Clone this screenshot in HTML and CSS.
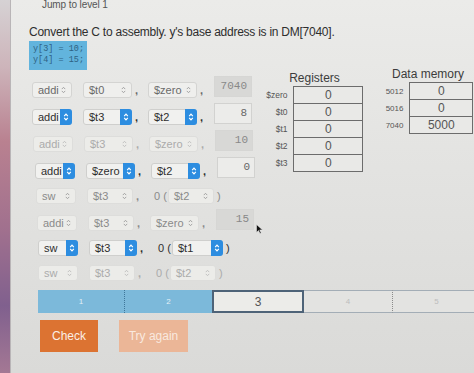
FILE: index.html
```html
<!DOCTYPE html>
<html>
<head>
<meta charset="utf-8">
<title>Convert the C to assembly</title>
<link rel="stylesheet" href="styles.css">
</head>
<body>
<div class="page">
  <div class="strip"></div>
  <div class="content">
    <div class="jump">Jump to level 1</div>
    <p class="title">Convert the C to assembly. y's base address is in DM[7040].</p>
    <div class="work">
      <div class="program">
        <pre class="code">y[3] = 10;
y[4] = 15;</pre>
        <div class="rows">
          <div class="row mid">
            <span class="sel w40"><span>addi</span><svg class="ar" viewBox="0 0 5 9"><path d="M.8 3.6 2.5 1.8 4.2 3.6M.8 5.4 2.5 7.2 4.2 5.4"/></svg></span>
            <span class="sel w49 g1"><span>$t0</span><svg class="ar" viewBox="0 0 5 9"><path d="M.8 3.6 2.5 1.8 4.2 3.6M.8 5.4 2.5 7.2 4.2 5.4"/></svg></span>
            <span class="cm">,</span>
            <span class="sel w49"><span>$zero</span><svg class="ar" viewBox="0 0 5 9"><path d="M.8 3.6 2.5 1.8 4.2 3.6M.8 5.4 2.5 7.2 4.2 5.4"/></svg></span>
            <span class="cm c2">,</span>
            <span class="in g">7040</span>
          </div>
          <div class="row on">
            <span class="sel b w40"><span>addi</span><span class="btn"><svg viewBox="0 0 6 10"><path d="M1.2 4.2 3 2.2 4.8 4.2M1.2 5.8 3 7.8 4.8 5.8"/></svg></span></span>
            <span class="sel b w49 g1"><span>$t3</span><span class="btn"><svg viewBox="0 0 6 10"><path d="M1.2 4.2 3 2.2 4.8 4.2M1.2 5.8 3 7.8 4.8 5.8"/></svg></span></span>
            <span class="cm">,</span>
            <span class="sel b w49"><span>$t2</span><span class="btn"><svg viewBox="0 0 6 10"><path d="M1.2 4.2 3 2.2 4.8 4.2M1.2 5.8 3 7.8 4.8 5.8"/></svg></span></span>
            <span class="cm c2">,</span>
            <span class="in">8</span>
          </div>
          <div class="row dis">
            <span class="sel w40"><span>addi</span><svg class="ar" viewBox="0 0 5 9"><path d="M.8 3.6 2.5 1.8 4.2 3.6M.8 5.4 2.5 7.2 4.2 5.4"/></svg></span>
            <span class="sel w49 g1"><span>$t3</span><svg class="ar" viewBox="0 0 5 9"><path d="M.8 3.6 2.5 1.8 4.2 3.6M.8 5.4 2.5 7.2 4.2 5.4"/></svg></span>
            <span class="cm">,</span>
            <span class="sel w49"><span>$zero</span><svg class="ar" viewBox="0 0 5 9"><path d="M.8 3.6 2.5 1.8 4.2 3.6M.8 5.4 2.5 7.2 4.2 5.4"/></svg></span>
            <span class="cm c2">,</span>
            <span class="in g">10</span>
          </div>
          <div class="row on">
            <span class="sel b w40"><span>addi</span><span class="btn"><svg viewBox="0 0 6 10"><path d="M1.2 4.2 3 2.2 4.8 4.2M1.2 5.8 3 7.8 4.8 5.8"/></svg></span></span>
            <span class="sel b w49 g1"><span>$zero</span><span class="btn"><svg viewBox="0 0 6 10"><path d="M1.2 4.2 3 2.2 4.8 4.2M1.2 5.8 3 7.8 4.8 5.8"/></svg></span></span>
            <span class="cm">,</span>
            <span class="sel b w49"><span>$t2</span><span class="btn"><svg viewBox="0 0 6 10"><path d="M1.2 4.2 3 2.2 4.8 4.2M1.2 5.8 3 7.8 4.8 5.8"/></svg></span></span>
            <span class="cm c2">,</span>
            <span class="in">0</span>
          </div>
          <div class="row short mid2">
            <span class="sel w40"><span>sw</span><svg class="ar" viewBox="0 0 5 9"><path d="M.8 3.6 2.5 1.8 4.2 3.6M.8 5.4 2.5 7.2 4.2 5.4"/></svg></span>
            <span class="sel w46 g1"><span>$t3</span><svg class="ar" viewBox="0 0 5 9"><path d="M.8 3.6 2.5 1.8 4.2 3.6M.8 5.4 2.5 7.2 4.2 5.4"/></svg></span>
            <span class="cm">,</span>
            <span class="off">0 (</span>
            <span class="sel w46"><span>$t2</span><svg class="ar" viewBox="0 0 5 9"><path d="M.8 3.6 2.5 1.8 4.2 3.6M.8 5.4 2.5 7.2 4.2 5.4"/></svg></span>
            <span class="par">)</span>
          </div>
          <div class="row mid2">
            <span class="sel w40"><span>addi</span><svg class="ar" viewBox="0 0 5 9"><path d="M.8 3.6 2.5 1.8 4.2 3.6M.8 5.4 2.5 7.2 4.2 5.4"/></svg></span>
            <span class="sel w46 g1"><span>$t3</span><svg class="ar" viewBox="0 0 5 9"><path d="M.8 3.6 2.5 1.8 4.2 3.6M.8 5.4 2.5 7.2 4.2 5.4"/></svg></span>
            <span class="cm">,</span>
            <span class="sel w49 g2"><span>$zero</span><svg class="ar" viewBox="0 0 5 9"><path d="M.8 3.6 2.5 1.8 4.2 3.6M.8 5.4 2.5 7.2 4.2 5.4"/></svg></span>
            <span class="cm c2">,</span>
            <span class="in g">15</span>
          </div>
          <div class="row short on">
            <span class="sel b w40"><span>sw</span><span class="btn"><svg viewBox="0 0 6 10"><path d="M1.2 4.2 3 2.2 4.8 4.2M1.2 5.8 3 7.8 4.8 5.8"/></svg></span></span>
            <span class="sel b w48 g1"><span>$t3</span><span class="btn"><svg viewBox="0 0 6 10"><path d="M1.2 4.2 3 2.2 4.8 4.2M1.2 5.8 3 7.8 4.8 5.8"/></svg></span></span>
            <span class="cm">,</span>
            <span class="off">0 (</span>
            <span class="sel b w51"><span>$t1</span><span class="btn"><svg viewBox="0 0 6 10"><path d="M1.2 4.2 3 2.2 4.8 4.2M1.2 5.8 3 7.8 4.8 5.8"/></svg></span></span>
            <span class="par">)</span>
          </div>
          <div class="row short dis">
            <span class="sel w40"><span>sw</span><svg class="ar" viewBox="0 0 5 9"><path d="M.8 3.6 2.5 1.8 4.2 3.6M.8 5.4 2.5 7.2 4.2 5.4"/></svg></span>
            <span class="sel w46 g1"><span>$t3</span><svg class="ar" viewBox="0 0 5 9"><path d="M.8 3.6 2.5 1.8 4.2 3.6M.8 5.4 2.5 7.2 4.2 5.4"/></svg></span>
            <span class="cm">,</span>
            <span class="off">0 (</span>
            <span class="sel w46"><span>$t2</span><svg class="ar" viewBox="0 0 5 9"><path d="M.8 3.6 2.5 1.8 4.2 3.6M.8 5.4 2.5 7.2 4.2 5.4"/></svg></span>
            <span class="par">)</span>
          </div>
        </div>
      </div>
      <div class="regs">
        <div class="ptitle">Registers</div>
        <table class="tbl">
          <tr><th>$zero</th><td>0</td></tr>
          <tr><th>$t0</th><td>0</td></tr>
          <tr><th>$t1</th><td>0</td></tr>
          <tr><th>$t2</th><td>0</td></tr>
          <tr><th>$t3</th><td>0</td></tr>
        </table>
      </div>
      <div class="dm">
        <div class="ptitle">Data memory</div>
        <table class="tbl dmt">
          <tr><th>5012</th><td>0</td></tr>
          <tr><th>5016</th><td>0</td></tr>
          <tr><th>7040</th><td>5000</td></tr>
        </table>
      </div>
    </div>
    <div class="prog">
      <div class="seg done first">1</div>
      <div class="seg done">2</div>
      <div class="seg cur">3</div>
      <div class="seg todo four">4</div>
      <div class="seg todo five">5</div>
    </div>
    <div class="btns">
      <button class="bt check">Check</button>
      <button class="bt try">Try again</button>
    </div>
  </div>
</div>
<svg class="cursor" viewBox="0 0 7 10"><path d="M.5.5v8l2-2 1.5 3 1.2-.6-1.5-3H6.5z" fill="#111" stroke="#eee" stroke-width=".5"/></svg>
</body>
</html>
```
FILE: styles.css
```css
* { box-sizing: border-box; }
html, body { margin: 0; }
body {
  width: 474px;
  height: 373px;
  overflow: hidden;
  position: relative;
  background: linear-gradient(180deg, #ebebe9 0%, #e3e3e1 45%, #dadad8 100%);
  font-family: "Liberation Sans", Arial, sans-serif;
  color: #444;
}
.page { display: flex; height: 373px; }
.strip {
  width: 11px;
  flex: none;
  background: linear-gradient(180deg, #d6d2d4 0%, #cdb4ba 18%, #b98190 38%, #a0708e 62%, #80608e 82%, #a47894 100%);
  border-right: 1px solid #b9b5b7;
}
.content { flex: 1; min-width: 0; padding-left: 18px; }
.jump {
  margin-top: -1px;
  height: 11px;
  line-height: 11px;
  font-size: 10px;
  color: #555;
  padding-left: 13px;
  letter-spacing: -0.1px;
}
.title {
  margin: 15px 0 0;
  font-size: 12px;
  line-height: 15px;
  letter-spacing: -0.25px;
  color: #2e2e2e;
  white-space: nowrap;
}
.work { display: flex; align-items: flex-start; margin-top: 1px; }
.program { width: 237px; flex: none; }
.code {
  display: block;
  margin: 0;
  width: 58px;
  height: 29px;
  padding: 3px 4px;
  background: #62b4dd;
  color: #2f6283;
  font-family: "Liberation Mono", monospace;
  font-size: 8.5px;
  line-height: 11px;
}
.rows { display: flex; flex-direction: column; gap: 5px; margin-top: 6px; padding-left: 3px; }
.row { display: flex; align-items: flex-end; height: 22px; color: #333; }
.row.short { height: 20px; }
.row:nth-child(3) { padding-left: 1px; }
.row:nth-child(4) { padding-left: 3px; }
.row:nth-child(5) { padding-left: 4px; }
.row:nth-child(6) { padding-left: 5px; }
.row:nth-child(7) { padding-left: 6px; }
.row:nth-child(8) { padding-left: 6px; }
.sel {
  display: flex;
  align-items: center;
  justify-content: space-between;
  flex: none;
  height: 16px;
  padding: 0 5px 0 5px;
  border: 1px solid #d4d4d2;
  border-radius: 3px;
  background: #efefed;
  font-size: 11px;
  line-height: 14px;
}
.w40 { width: 40px; }
.g1 { margin-left: 11px; }
.w46 { width: 46px; }
.w48 { width: 48px; }
.w49 { width: 49px; }
.w51 { width: 51px; }
.ar { width: 5px; height: 10px; fill: none; stroke: #9c9c9c; stroke-width: .9; }
.sel.b { padding-right: 0; background: #f1f1ef; border-color: #cfcfcd; }
.btn {
  display: flex;
  align-items: center;
  justify-content: center;
  width: 12px;
  height: 16px;
  margin: 0 -1px 0 0;
  background: #2d8de0;
  border-radius: 0 3px 3px 0;
}
.btn svg { width: 6px; height: 10px; fill: none; stroke: #fff; stroke-width: 1.2; }
.cm {
  flex: none;
  width: 16px;
  padding-left: 3px;
  font-size: 11px;
  font-weight: bold;
  line-height: 15px;
}
.cm.c2 { width: 17px; }
.off { flex: none; padding-left: 5px; width: 19px; font-size: 11px; line-height: 15px; white-space: pre; }
.par { flex: none; padding-left: 3px; font-size: 11px; line-height: 15px; }
.in {
  flex: none;
  width: 38px;
  height: 21px;
  margin-bottom: 1px;
  padding: 0 4px;
  border: 1px solid #d2d2d0;
  background: #ececea;
  font-family: "Liberation Mono", monospace;
  font-size: 11px;
  line-height: 19px;
  text-align: right;
  color: #666;
}
.in.g { background: #d8d8d6; border-color: #d6d6d4; color: #888; }
.mid { color: #6a6a6a; }
.mid2 { color: #8a8a8a; }
.dis { color: #ababab; }
.dis .sel, .mid2 .sel { background: #ecece9; border-color: #dddddb; }
.dis .ar { stroke: #bdbdbd; }
.on { color: #2e2e2e; }
.regs { width: 97px; flex: none; margin-top: 30px; }
.dm { width: 90px; flex: none; margin-left: 20px; margin-top: 26px; }
.ptitle { text-align: center; font-size: 12px; line-height: 15px; color: #3c3c3c; }
.tbl { border-collapse: collapse; }
.tbl th {
  width: 28px;
  padding: 0 6px 0 0;
  font-weight: normal;
  font-size: 8.5px;
  text-align: right;
  color: #555;
}
.tbl td {
  width: 69px;
  height: 17px;
  padding: 0;
  border: 1px solid #6c6c6c;
  background: #e9e9e7;
  text-align: center;
  font-size: 12px;
  line-height: 15px;
  color: #555;
}
.dmt th { width: 27px; font-size: 8px; }
.dmt td { width: 63px; }
.prog { display: flex; height: 23px; margin: 9px 0 0 9px; }
.seg { display: flex; align-items: center; justify-content: center; flex: none; font-size: 8px; }
.done { width: 87px; background: #7cb9da; color: #e2f0f7; }
.done.first { border-right: 1px dotted #3f7699; }
.cur { width: 92px; border: 2px solid #4e6378; background: #ecece9; font-size: 12px; color: #555; }
.todo { background: #e3e3e1; border-top: 1px solid #a3adb6; border-bottom: 1px solid #a3adb6; color: #bdbdbd; }
.four { width: 89px; border-right: 1px dotted #8a8a8a; }
.five { width: 87px; }
.btns { display: flex; gap: 21px; margin: 7px 0 0 11px; }
.bt {
  height: 32px;
  border: 0;
  padding: 0;
  font-family: "Liberation Sans", Arial, sans-serif;
  font-size: 12px;
}
.check { width: 58px; background: #dc7332; color: #fbeee6; }
.try { width: 69px; background: #ebb697; color: #f9e9df; }
.cursor { position: absolute; left: 256px; top: 224px; width: 7px; height: 10px; }
```
